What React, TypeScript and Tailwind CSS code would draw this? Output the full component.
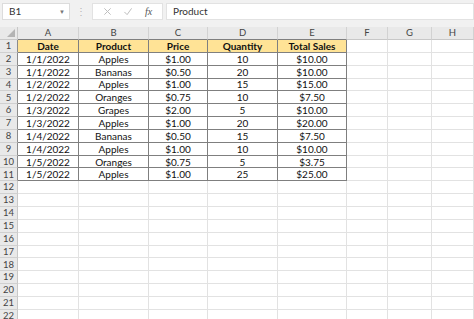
import React from "react";

const cols = ["A", "B", "C", "D", "E", "F", "G", "H"];
const header = ["Date", "Product", "Price", "Quantity", "Total Sales"];
const data: string[][] = [
  ["1/1/2022", "Apples", "$1.00", "10", "$10.00"],
  ["1/1/2022", "Bananas", "$0.50", "20", "$10.00"],
  ["1/2/2022", "Apples", "$1.00", "15", "$15.00"],
  ["1/2/2022", "Oranges", "$0.75", "10", "$7.50"],
  ["1/3/2022", "Grapes", "$2.00", "5", "$10.00"],
  ["1/3/2022", "Apples", "$1.00", "20", "$20.00"],
  ["1/4/2022", "Bananas", "$0.50", "15", "$7.50"],
  ["1/4/2022", "Apples", "$1.00", "10", "$10.00"],
  ["1/5/2022", "Oranges", "$0.75", "5", "$3.75"],
  ["1/5/2022", "Apples", "$1.00", "25", "$25.00"],
];

const gridCols = "grid grid-cols-[18px_61px_70px_59px_70px_69px_41px_44px_1fr]";

export default function App() {
  const rows: React.ReactNode[] = [];
  for (let r = 1; r <= 22; r++) {
    const inTable = r <= 11;
    rows.push(
      <div key={"rh" + r} className={`h-[12.85px] bg-[#e9e9e9] border-b border-[#d0d0d0] border-r ${inTable ? "border-r-[#8c8c8c]" : "border-r-[#c8c8c8]"} flex items-center justify-center text-[9.5px] text-[#444] leading-none`}>
        {r}
      </div>
    );
    for (let c = 0; c < 8; c++) {
      const t = inTable && c < 5;
      let text = "";
      if (t) text = r === 1 ? header[c] : data[r - 2][c];
      rows.push(
        <div
          key={r + "-" + c}
          className={`h-[12.85px] border-r border-b flex items-center justify-center leading-none text-[10px] text-[#111] whitespace-nowrap ${
            t ? "border-[#7f7f7f]" : "border-[#e2e2e2]"
          } ${t && r === 1 ? "bg-[#ffe396] font-bold" : "bg-white"}`}
        >
          {text}
        </div>
      );
    }
  }

  return (
    <div className="w-[474px] h-[319px] overflow-hidden bg-white font-['Lato','Liberation_Sans',sans-serif]">
      {/* formula bar */}
      <div className="h-[27px] bg-[#f1f1f1] flex items-start pt-[3px] pl-[2px]">
        <div className="w-[68px] h-[17px] bg-white border border-[#dcdcdc] flex items-center justify-between pl-[6px] pr-[4px]">
          <span className="text-[10px] text-[#333]">B1</span>
          <span className="text-[6px] text-[#777]">▼</span>
        </div>
        <div className="w-[22px] h-[17px] flex items-center justify-center text-[10px] text-[#b5b5b5]">⋮</div>
        <div className="w-[71px] h-[17px] bg-white border border-[#e2e2e2] flex items-center justify-around px-[4px]">
          <svg width="9" height="9" viewBox="0 0 10 10">
            <path d="M1.5 1.5 L8.5 8.5 M8.5 1.5 L1.5 8.5" stroke="#bdbdbd" strokeWidth="1.1" />
          </svg>
          <svg width="10" height="9" viewBox="0 0 10 10">
            <path d="M1 5.5 L4 8.5 L9 1.5" stroke="#bdbdbd" strokeWidth="1.1" fill="none" />
          </svg>
          <span className="text-[10px] italic text-[#555] font-['Liberation_Serif',serif]">fx</span>
        </div>
        <div className="ml-[3px] flex-1 h-[17px] bg-white border border-[#e2e2e2] flex items-center pl-[6px]">
          <span className="text-[10px] text-[#333]">Product</span>
        </div>
      </div>
      {/* grid */}
      <div className={gridCols}>
        <div className="h-[13px] bg-[#e9e9e9] border-r border-b border-[#c8c8c8] relative">
          <svg className="absolute right-[2px] bottom-[2px]" width="8" height="8" viewBox="0 0 8 8">
            <path d="M8 0 L8 8 L0 8 Z" fill="#b4b4b4" />
          </svg>
        </div>
        {cols.map((c, i) => (
          <div
            key={c}
            className={`h-[13px] bg-[#e9e9e9] border-r border-[#d2d2d2] border-b flex items-center justify-center text-[9.5px] text-[#444] leading-none ${
              i < 5 ? "border-b-[#7f7f7f]" : "border-b-[#c8c8c8]"
            }`}
          >
            {c}
          </div>
        ))}
        {rows}
      </div>
    </div>
  );
}
